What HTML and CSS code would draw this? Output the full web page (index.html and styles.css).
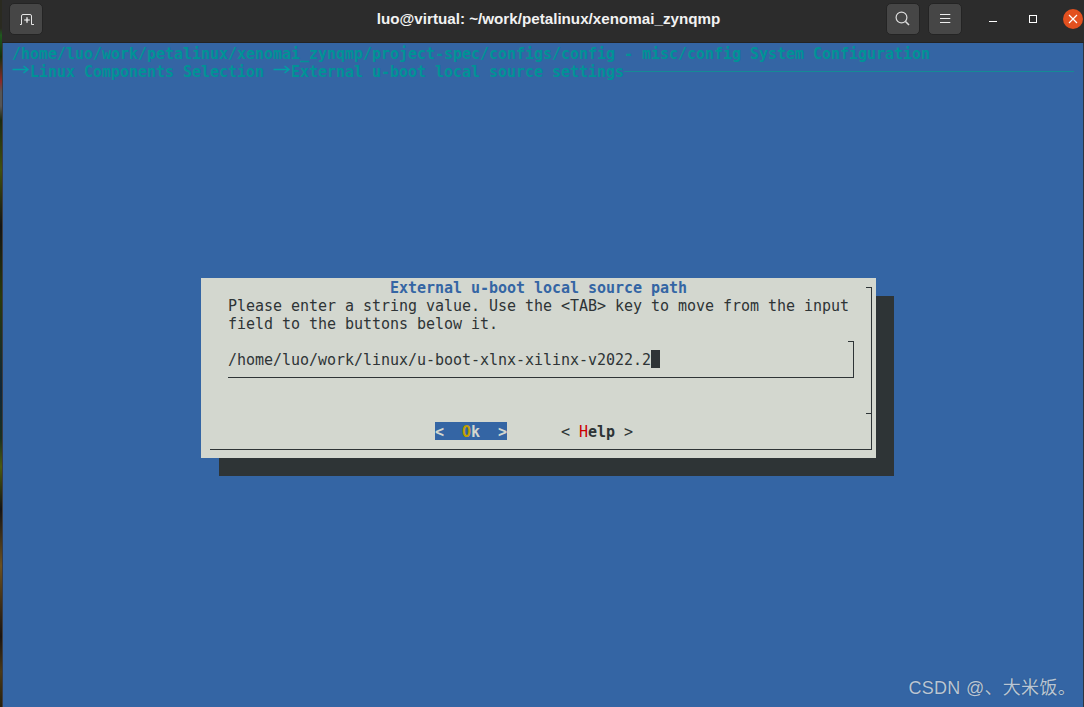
FILE: index.html
```html
<!DOCTYPE html>
<html lang="en">
<head>
<meta charset="utf-8">
<title>luo@virtual: ~/work/petalinux/xenomai_zynqmp</title>
<link rel="stylesheet" href="styles.css">
</head>
<body>
<div class="wallpaper"></div>
<div class="window">
  <header class="titlebar">
    <div class="tb-left">
      <button class="tb-btn"><svg width="18" height="16" viewBox="0 0 18 16" fill="none" stroke="#e4e4e4"><path d="M3 13.5H4.5V5Q4.5 3.5 6 3.5H13Q14.5 3.5 14.5 5V13.5H17" stroke-width="1"/><path d="M10 6.2v5.6M7.2 9h5.6" stroke="#fff" stroke-width="1.2"/></svg></button>
    </div>
    <div class="tb-title">luo@virtual: ~/work/petalinux/xenomai_zynqmp</div>
    <div class="tb-right">
      <button class="tb-btn"><svg width="16" height="16" viewBox="0 0 16 16" fill="none" stroke="#dcdcdc" stroke-width="1.2"><circle cx="6.5" cy="6.5" r="5.4"/><path d="M10.5 10.5l3.5 3.6" stroke-width="1.5"/></svg></button>
      <button class="tb-btn"><svg width="16" height="16" viewBox="0 0 16 16" fill="none" stroke="#eee" stroke-width="1"><path d="M3 3.5h10.3M3 7.5h10.3M3 11.5h10.3"/></svg></button>
      <div class="win-ctrls">
        <span class="win-ctrl"><svg width="10" height="10" viewBox="0 0 10 10"><path d="M1 7.5h8" stroke="#fff" stroke-width="1"/></svg></span>
        <span class="win-ctrl"><svg width="10" height="10" viewBox="0 0 10 10" fill="none"><rect x="1.5" y="1.5" width="7" height="7" stroke="#fff"/></svg></span>
        <span class="win-close"><svg width="10" height="10" viewBox="0 0 10 10"><path d="M1 1l8 8M9 1l-8 8" stroke="#fff" stroke-width="1.2"/></svg></span>
      </div>
    </div>
  </header>
  <main class="terminal">
    <div class="tline">/home/luo/work/petalinux/xenomai_zynqmp/project-spec/configs/config - misc/config System Configuration</div>
    <div class="tline crumb"><svg class="arrow" width="18" height="18" viewBox="0 0 18 18" fill="none" stroke="#00a0a4"><path d="M0.5 6.5H15.5M11.5 3l4.5 3.5-4.5 3.5" stroke-width="1.4"/></svg><span>Linux Components Selection </span><svg class="arrow" width="18" height="18" viewBox="0 0 18 18" fill="none" stroke="#00a0a4"><path d="M0.5 6.5H15.5M11.5 3l4.5 3.5-4.5 3.5" stroke-width="1.4"/></svg><span>External u-boot local source settings</span><span class="rule"></span></div>
    <section class="dialog">
      <div class="frame">
        <div class="dlg-title">External u-boot local source path</div>
        <div class="dlg-text">Please enter a string value. Use the &lt;TAB&gt; key to move from the input<br>field to the buttons below it.</div>
        <div class="inputbox"><span>/home/luo/work/linux/u-boot-xlnx-xilinx-v2022.2</span><span class="cursor"></span></div>
        <div class="buttons">
          <span class="btn active"><span class="ch">&lt;</span><span class="hot-o">O</span>k<span class="ch">&gt;</span></span>
          <span class="btn help">&lt; <span class="hot-h">H</span><span class="help-rest">elp</span> &gt;</span>
        </div>
      </div>
    </section>
    <div class="watermark">CSDN @、大米饭。</div>
  </main>
</div>
</body>
</html>
```
FILE: styles.css
```css
* { box-sizing: border-box; }
html, body { margin: 0; height: 100%; overflow: hidden; }
body {
  width: 1084px; height: 707px;
  display: flex;
  background: #2c2c2c;
  font-family: "DejaVu Sans Mono", monospace;
}
.wallpaper {
  flex: 0 0 2px;
  background: linear-gradient(180deg, #2a2a20 0 4%, #1f5a1f 5%, #16300c 8%, #8a2a2a 11.5%, #555 13%, #555 15%, #1c2a10 17%, #40500f 24%, #141414 32%, #2a3a0a 42%, #102638 55%, #1a3020 62%, #4a5a10 66%, #141414 72%, #6a5020 80%, #1a1410 90%, #4a3a18 95%, #26200c 100%);
}
.window { flex: 1; min-width: 0; display: flex; flex-direction: column; }
.titlebar {
  position: relative;
  flex: 0 0 43px;
  display: flex; justify-content: space-between;
  padding: 3px 0 0 7px;
  background: #2c2c2c;
  border-bottom: 1px solid #232323;
}
.tb-left, .tb-right { display: flex; align-items: flex-start; }
.tb-right { gap: 8px; }
.tb-btn {
  width: 34px; height: 32px; padding: 0;
  display: flex; align-items: center; justify-content: center;
  background: #464646;
  border: 1px solid #242424;
  border-radius: 5px;
}
.tb-title {
  position: absolute; left: 11px; right: 0; top: 9px;
  text-align: center;
  font: 700 15.2px/20px "Liberation Sans", sans-serif;
  color: #f2f2f2;
}
.win-ctrls { display: flex; align-items: center; height: 32px; margin-left: 3px; padding-right: 1px; }
.win-ctrl { width: 40px; display: flex; justify-content: center; }
.win-close {
  width: 20px; height: 20px; margin-left: 10px; border-radius: 50%;
  background: #e2501f;
  display: flex; align-items: center; justify-content: center;
}
.terminal {
  position: relative;
  flex: 1;
  background: #3465a4;
  border-left: 1px solid #3a3a42;
  border-right: 1px solid #2c3540;
  padding-top: 2px;
  font-size: 15px; line-height: 18px;
  letter-spacing: -0.03px;
  color: #009296;
  font-weight: 700;
}
.tline { padding-left: 9px; white-space: pre; height: 18px; }
.crumb { display: flex; }
.crumb span { flex: none; }
.arrow { flex: none; display: block; }
.crumb .rule { flex: 1 1 0; height: 1px; margin: 8px 9px 0 0; background: #158a96; }
.dialog {
  width: 675px; height: 180px;
  margin: 197px 0 0 198px;
  padding: 9px 4px 8px 9px;
  background: #d3d7cf;
  box-shadow: 18px 18px 0 #2e3436;
  font-weight: 400;
  color: #2e3436;
}
.frame {
  position: relative;
  display: flow-root;
  height: 163px;
  border-right: 1px solid #2e3436;
  border-bottom: 1px solid #2e3436;
  padding-left: 18px;
}
.frame::before {
  content: ""; position: absolute; right: 0; top: 0; width: 5px; height: 1px; background: #2e3436;
}
.frame::after {
  content: ""; position: absolute; right: 0; top: 126px; width: 5px; height: 1px; background: #2e3436;
}
.dlg-title { height: 18px; margin-top: -8px; padding-left: 162px; font-weight: 700; color: #3465a4; white-space: pre; }
.dlg-text { height: 36px; white-space: pre; }
.inputbox {
  position: relative;
  width: 626px; height: 37px;
  margin-top: 8px;
  padding-top: 10px;
  display: flex;
  align-items: flex-start;
  border-right: 1px solid #2e3436;
  border-bottom: 1px solid #2e3436;
  white-space: pre;
}
.inputbox::before {
  content: ""; position: absolute; right: 0; top: 0; width: 5px; height: 1px; background: #2e3436;
}
.cursor { width: 9px; height: 18px; margin-top: -1px; background: #2e3436; }
.buttons { display: flex; align-items: flex-start; margin: 45px 0 0 207px; white-space: pre; }
.btn { display: inline-block; height: 18px; }
.active { display: inline-flex; width: 72px; margin-top: -1px; padding-top: 1px; background: #3465a4; color: #d3d7cf; font-weight: 700; }
.ch { width: 27px; }
.ch:last-child { width: 9px; margin-left: 18px; }
.hot-o { color: #c4a000; }
.help { margin-left: 54px; }
.hot-h { color: #cc0000; }
.help-rest { font-weight: 700; }
.watermark {
  position: absolute; right: 7px; bottom: 7px;
  font: 400 18px/24px "Liberation Sans", "Noto Sans CJK SC", sans-serif;
  letter-spacing: 0.3px;
  color: #b9c6d6;
  text-shadow: 0 0 1px #24466f;
}
```
